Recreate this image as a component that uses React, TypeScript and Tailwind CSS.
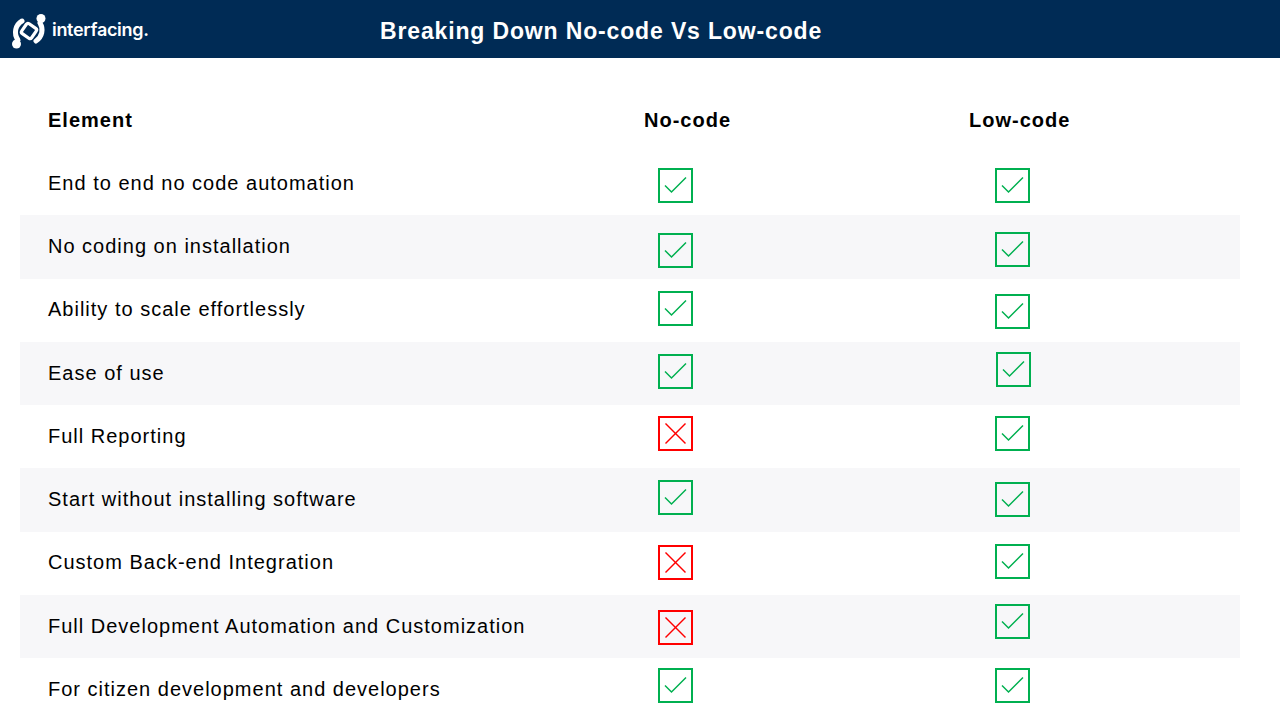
import React from 'react';

type Mark = 'yes' | 'no';

interface Row {
  label: string;
  noCode: Mark;
  lowCode: Mark;
  // small vertical nudges so the boxes sit where they do in the slide
  noShift: string;
  lowShift: string;
}

const rows: Row[] = [
  { label: 'End to end no code automation', noCode: 'yes', lowCode: 'yes', noShift: 'translate-y-[2px]', lowShift: 'translate-y-[2px]' },
  { label: 'No coding on installation', noCode: 'yes', lowCode: 'yes', noShift: 'translate-y-[4px]', lowShift: 'translate-y-[3px]' },
  { label: 'Ability to scale effortlessly', noCode: 'yes', lowCode: 'yes', noShift: '-translate-y-[2px]', lowShift: 'translate-y-[1px]' },
  { label: 'Ease of use', noCode: 'yes', lowCode: 'yes', noShift: 'translate-y-[-2px]', lowShift: 'translate-y-[-4px] translate-x-[1px]' },
  { label: 'Full Reporting', noCode: 'no', lowCode: 'yes', noShift: 'translate-y-[-3px]', lowShift: 'translate-y-[-3px]' },
  { label: 'Start without installing software', noCode: 'yes', lowCode: 'yes', noShift: 'translate-y-[-3px]', lowShift: 'translate-y-[-1px]' },
  { label: 'Custom Back-end Integration', noCode: 'no', lowCode: 'yes', noShift: 'translate-y-[-1px]', lowShift: 'translate-y-[-2px]' },
  { label: 'Full Development Automation and Customization', noCode: 'no', lowCode: 'yes', noShift: 'translate-y-[1px]', lowShift: 'translate-y-[-5px]' },
  { label: 'For citizen development and developers', noCode: 'yes', lowCode: 'yes', noShift: 'translate-y-[-5px]', lowShift: 'translate-y-[-5px]' },
];

const Logo = () => (
  <svg width="36" height="36" viewBox="0 0 36 36" fill="none">
    <path d="M11 8 A13 13 0 0 0 7 27" stroke="white" strokeWidth="5" strokeLinecap="round" />
    <path d="M25 28 A13 13 0 0 0 29 10" stroke="white" strokeWidth="5" strokeLinecap="round" />
    <rect x="12" y="12" width="12" height="12" rx="2" transform="rotate(35 18 18)" stroke="white" strokeWidth="3.2" />
    <circle cx="30" cy="5.5" r="4.5" fill="white" />
    <circle cx="5.5" cy="31" r="4.5" fill="white" />
  </svg>
);

const MarkBox = ({ mark, shift }: { mark: Mark; shift: string }) => {
  const color = mark === 'yes' ? '#00b050' : '#ff0000';
  return (
    <div
      className={`w-[35px] h-[35px] border-2 flex items-center justify-center ${shift} ${
        mark === 'yes' ? 'border-[#00b050]' : 'border-[#ff0000]'
      }`}
    >
      <svg width="31" height="31" viewBox="0 0 31 31" fill="none">
        {mark === 'yes' ? (
          <path d="M5 15.5 L11.5 22 L26 7.5" stroke={color} strokeWidth="1.5" />
        ) : (
          <>
            <path d="M5.5 5.5 L25.5 25.5" stroke={color} strokeWidth="1.5" />
            <path d="M25.5 5.5 L5.5 25.5" stroke={color} strokeWidth="1.5" />
          </>
        )}
      </svg>
    </div>
  );
};

const App: React.FC = () => {
  return (
    <div className="w-[1280px] h-[720px] bg-white overflow-hidden font-['Liberation_Sans',Arial,sans-serif] text-black">
      <header className="h-[58px] bg-[#002b55] flex items-center">
        <div className="flex items-center pl-[11px] w-[380px] translate-y-[2px]">
          <Logo />
          <span className="ml-[5px] text-white text-[18px] font-semibold tracking-[-0.3px] font-['Inter',sans-serif] -translate-y-[2px]">
            interfacing.
          </span>
        </div>
        <h1 className="text-white text-[23px] font-bold tracking-[0.85px] translate-y-[2px]">
          Breaking Down No-code Vs Low-code
        </h1>
      </header>

      <div className="pl-[20px] pr-[40px] pt-[30px]">
        <div className="h-[64px] flex items-center pl-[28px] text-[20px] font-bold tracking-[1px]">
          <div className="w-[596px]">Element</div>
          <div className="w-[325px]">No-code</div>
          <div>Low-code</div>
        </div>

        {rows.map((row, i) => (
          <div
            key={row.label}
            className={`h-[63.3px] flex items-center pl-[28px] text-[20px] tracking-[1px] ${i % 2 === 1 ? 'bg-[#f7f7f9]' : ''}`}
          >
            <div className="w-[610px] -translate-y-[1px]">{row.label}</div>
            <div className="w-[337px]">
              <MarkBox mark={row.noCode} shift={row.noShift} />
            </div>
            <div>
              <MarkBox mark={row.lowCode} shift={row.lowShift} />
            </div>
          </div>
        ))}
      </div>
    </div>
  );
};

export default App;
